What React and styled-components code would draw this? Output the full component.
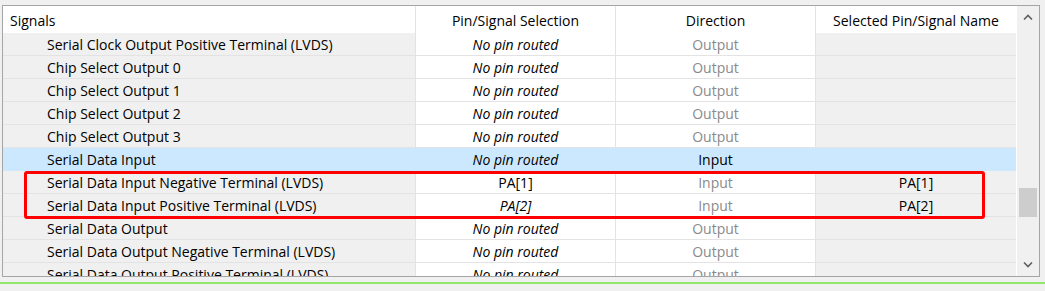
import React from "react";
import styled, { createGlobalStyle } from "styled-components";

const GlobalStyle = createGlobalStyle`
  html, body {
    margin: 0;
    padding: 0;
    background: #f0f0f0;
  }
  body {
    font-family: "Open Sans", "Noto Sans", sans-serif;
    font-size: 14px;
    color: #000;
  }
`;

const Page = styled.div`
  width: 1045px;
  height: 291px;
  padding-top: 5px;
  box-sizing: border-box;
  background: #f0f0f0;
`;

const Frame = styled.div`
  position: relative;
  margin-left: 2px;
  width: 1038px;
  height: 272px;
  box-sizing: border-box;
  border: 1px solid #a5a5a5;
  display: flex;
  background: #f0f0f0;
`;

const TableArea = styled.div`
  width: 1014px;
  display: flex;
  flex-direction: column;
  overflow: hidden;
`;

const Row = styled.div`
  display: grid;
  grid-template-columns: 413px 200px 200px 201px;
  height: ${p => (p.$header ? 27 : 23)}px;
  flex: none;
`;

const HeaderCell = styled.div`
  background: #fff;
  border-right: 1px solid #e3e3e3;
  display: flex;
  align-items: center;
  justify-content: ${p => (p.$left ? "flex-start" : "center")};
  padding-left: ${p => (p.$left ? 7 : 0)}px;
  padding-top: 1px;
  box-sizing: border-box;
  white-space: nowrap;
`;

const Cell = styled.div`
  background: ${p => (p.$selected ? "#cce8ff" : p.$shade ? "#f0f0f0" : "#fff")};
  border-right: 1px solid ${p => (p.$selected ? "#cce8ff" : "#e3e3e3")};
  border-bottom: 1px solid ${p => (p.$selected ? "#cce8ff" : "#e3e3e3")};
  display: flex;
  align-items: center;
  justify-content: ${p => (p.$left ? "flex-start" : "center")};
  padding-left: ${p => (p.$left ? 44 : 0)}px;
  padding-top: 1px;
  box-sizing: border-box;
  white-space: nowrap;
  font-style: ${p => (p.$italic ? "italic" : "normal")};
  color: ${p => (p.$dim ? "#8a8a8a" : "#000")};
`;

const ScrollBar = styled.div`
  width: 22px;
  display: flex;
  flex-direction: column;
  align-items: center;
  border-left: 1px solid #fff;
  background: #f0f0f0;
`;

const Arrow = styled.div`
  height: 22px;
  display: flex;
  align-items: center;
  justify-content: center;
  color: #606060;
`;

const Track = styled.div`
  flex: 1;
  width: 100%;
  display: flex;
  flex-direction: column;
  align-items: center;
  padding-top: ${p => p.$offset}px;
  box-sizing: border-box;
`;

const Thumb = styled.div`
  width: 18px;
  height: 29px;
  background: #cdcdcd;
`;

const Highlight = styled.div`
  position: absolute;
  left: 21px;
  top: 165px;
  width: 961px;
  height: 48px;
  box-sizing: border-box;
  border: 3px solid #ff0000;
  border-radius: 3px;
  pointer-events: none;
`;

const StatusLine = styled.div`
  margin-top: 5px;
  height: 2px;
  background: #8fe86c;
`;

const Chevron = ({ up }) => (
  <svg width="10" height="6" viewBox="0 0 10 6">
    <path
      d={up ? "M1 5.5 L5 1.5 L9 5.5" : "M1 0.5 L5 4.5 L9 0.5"}
      fill="none"
      stroke="currentColor"
      strokeWidth="1.6"
    />
  </svg>
);

const signals = [
  { name: "Serial Clock Output Positive Terminal (LVDS)", pin: "No pin routed", dir: "Output" },
  { name: "Chip Select Output 0", pin: "No pin routed", dir: "Output" },
  { name: "Chip Select Output 1", pin: "No pin routed", dir: "Output" },
  { name: "Chip Select Output 2", pin: "No pin routed", dir: "Output" },
  { name: "Chip Select Output 3", pin: "No pin routed", dir: "Output" },
  { name: "Serial Data Input", pin: "No pin routed", dir: "Input", selected: true },
  { name: "Serial Data Input Negative Terminal (LVDS)", pin: "PA[1]", pinPlain: true, dir: "Input", selectedName: "PA[1]" },
  { name: "Serial Data Input Positive Terminal (LVDS)", pin: "PA[2]", dir: "Input", selectedName: "PA[2]" },
  { name: "Serial Data Output", pin: "No pin routed", dir: "Output" },
  { name: "Serial Data Output Negative Terminal (LVDS)", pin: "No pin routed", dir: "Output" },
  { name: "Serial Data Output Positive Terminal (LVDS)", pin: "No pin routed", dir: "Output" }
];

const App = () => {
  return (
    <Page>
      <GlobalStyle />
      <Frame>
        <TableArea>
          <Row $header>
            <HeaderCell $left>Signals</HeaderCell>
            <HeaderCell>Pin/Signal Selection</HeaderCell>
            <HeaderCell>Direction</HeaderCell>
            <HeaderCell>Selected Pin/Signal Name</HeaderCell>
          </Row>
          {signals.map((s, index) => (
            <Row key={index}>
              <Cell $left $shade $selected={s.selected}>
                {s.name}
              </Cell>
              <Cell $italic={!s.pinPlain} $selected={s.selected}>
                {s.pin}
              </Cell>
              <Cell $dim={!s.selected} $selected={s.selected}>
                {s.dir}
              </Cell>
              <Cell $shade $selected={s.selected}>
                {s.selectedName}
              </Cell>
            </Row>
          ))}
        </TableArea>
        <ScrollBar>
          <Arrow>
            <Chevron up />
          </Arrow>
          <Track $offset={160}>
            <Thumb />
          </Track>
          <Arrow>
            <Chevron />
          </Arrow>
        </ScrollBar>
        <Highlight />
      </Frame>
      <StatusLine />
    </Page>
  );
};

export default App;
